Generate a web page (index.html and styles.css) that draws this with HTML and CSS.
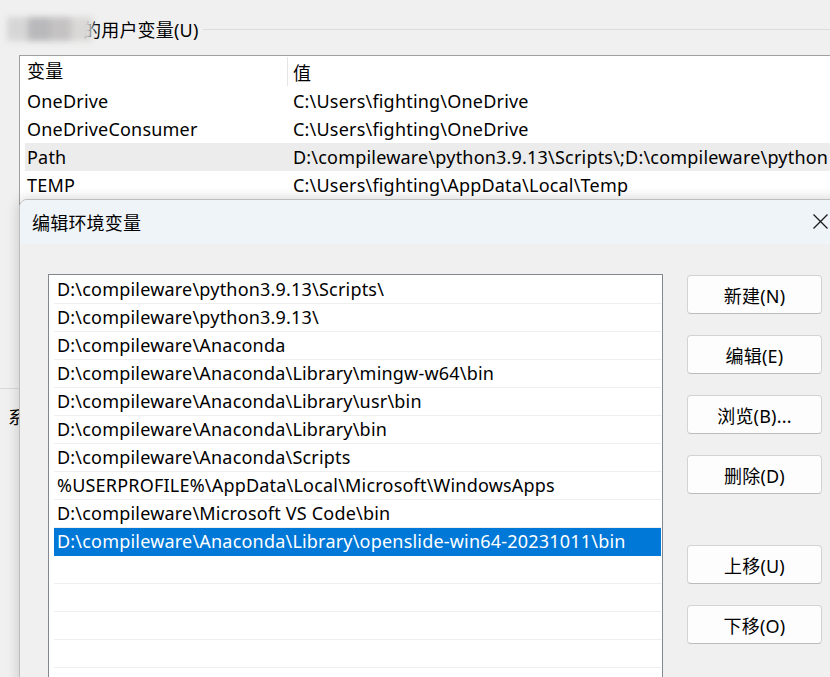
FILE: index.html
```html
<!DOCTYPE html>
<html lang="zh-CN">
<head>
<meta charset="utf-8">
<title>编辑环境变量</title>
<link rel="stylesheet" href="styles.css">
</head>
<body>
<div class="bgwin">
  <div class="group-head">
    <span class="blur"><i class="b1"></i><i class="b2"></i><i class="b3"></i><i class="b4"></i></span>
    <span class="group-label">的用户变量(U)</span>
    <span class="group-line"></span>
  </div>
  <div class="lv">
    <div class="lv-head">
      <span class="c1">变量</span>
      <span class="c2">值</span>
    </div>
    <div class="lv-row"><span class="c1">OneDrive</span><span class="c2">C:\Users\fighting\OneDrive</span></div>
    <div class="lv-row"><span class="c1">OneDriveConsumer</span><span class="c2">C:\Users\fighting\OneDrive</span></div>
    <div class="lv-row sel"><span class="c1">Path</span><span class="c2">D:\compileware\python3.9.13\Scripts\;D:\compileware\python</span></div>
    <div class="lv-row"><span class="c1">TEMP</span><span class="c2">C:\Users\fighting\AppData\Local\Temp</span></div>
  </div>
  <div class="sep-line"></div>
  <div class="sys-clip"><span class="sys-label">系统变量(S)</span></div>
</div>

<div class="dialog">
  <div class="titlebar">
    <span class="title">编辑环境变量</span>
    <svg class="close" width="15" height="15" viewBox="0 0 15 15"><path d="M0.5 0.5 L14.5 14.5 M14.5 0.5 L0.5 14.5" stroke="#1b1b1b" stroke-width="1.3" fill="none"/></svg>
  </div>
  <div class="body">
    <div class="listbox">
      <div class="item">D:\compileware\python3.9.13\Scripts\</div>
      <div class="item">D:\compileware\python3.9.13\</div>
      <div class="item">D:\compileware\Anaconda</div>
      <div class="item">D:\compileware\Anaconda\Library\mingw-w64\bin</div>
      <div class="item">D:\compileware\Anaconda\Library\usr\bin</div>
      <div class="item">D:\compileware\Anaconda\Library\bin</div>
      <div class="item">D:\compileware\Anaconda\Scripts</div>
      <div class="item">%USERPROFILE%\AppData\Local\Microsoft\WindowsApps</div>
      <div class="item">D:\compileware\Microsoft VS Code\bin</div>
      <div class="item selected">D:\compileware\Anaconda\Library\openslide-win64-20231011\bin</div>
      <div class="item"></div>
      <div class="item"></div>
      <div class="item"></div>
      <div class="item"></div>
      <div class="item"></div>
    </div>
    <div class="buttons">
      <button class="btn">新建(N)</button>
      <button class="btn">编辑(E)</button>
      <button class="btn">浏览(B)...</button>
      <button class="btn">删除(D)</button>
      <button class="btn gap">上移(U)</button>
      <button class="btn">下移(O)</button>
    </div>
  </div>
</div>
</body>
</html>
```
FILE: styles.css
```css
html, body {
  margin: 0;
  padding: 0;
}
body {
  width: 830px;
  height: 677px;
  overflow: hidden;
  background: #f0f0f0;
  font-family: "Noto Sans", "Noto Sans CJK SC", sans-serif;
  font-size: 18px;
  letter-spacing: 0.2px;
  color: #000;
  position: relative;
}

/* background window */
.bgwin {
  padding-top: 17px;
}
.group-head {
  display: flex;
  align-items: center;
  height: 24px;
  padding-left: 7px;
}
.blur {
  display: flex;
  width: 85px;
  height: 24px;
  margin-right: -9px;
  filter: blur(3px);
  position: relative;
  z-index: 1;
  flex: none;
}
.blur i {
  display: block;
  height: 100%;
  flex: 1;
}
.blur .b1 { background: #d6d6d6; }
.blur .b2 { background: #b9b9bb; }
.blur .b3 { background: #c4c2c2; }
.blur .b4 { background: #d9d8d6; }
.group-label {
  white-space: nowrap;
  padding-right: 4px;
}
.group-line {
  flex: 1;
  height: 1px;
  background: #dcdcdc;
}

.lv {
  margin: 14px 0 0 19px;
  height: 247px;
  background: #fff;
  border-top: 1px solid #a0a0a0;
  border-left: 1px solid #a0a0a0;
  overflow: hidden;
}
.lv-head {
  display: flex;
  height: 31px;
  align-items: center;
  margin-left: 5px;
}
.lv-head .c1 {
  border-right: 1px solid #e5e5e5;
  height: 29px;
  line-height: 29px;
}
.c1 {
  width: 260px;
  padding-left: 2px;
  flex: none;
  box-sizing: content-box;
}
.lv-head .c2 { padding-left: 5px; }
.lv-row .c1 { width: 261px; }
.lv-row .c2 { padding-left: 5px; }
.lv-row {
  display: flex;
  height: 28px;
  align-items: center;
  margin-left: 5px;
  white-space: nowrap;
}
.lv-row.sel { background: #ececec; }
.sep-line {
  margin-top: 85px;
  height: 1px;
  background: #d8d8d8;
}
.sys-clip {
  margin: 14px 0 0 8px;
  width: 12px;
  overflow: hidden;
  white-space: nowrap;
}

/* dialog */
.dialog {
  position: absolute;
  left: 19px;
  top: 199px;
  width: 840px;
  height: 520px;
  background: #f0f0f0;
  border: 1px solid #bdbdbd;
  border-top-left-radius: 8px;
  box-shadow: 0 0 14px rgba(0, 0, 0, 0.18);
  overflow: hidden;
}
.titlebar {
  height: 44px;
  background: #eef4f8;
  display: flex;
  align-items: center;
  padding-left: 12px;
}
.title { flex: 1; }
.close {
  position: absolute;
  left: 793px;
  top: 14px;
}
.body {
  display: flex;
  align-items: flex-start;
  padding: 30px 0 0 28px;
}
.listbox {
  width: 615px;
  height: 420px;
  background: #fff;
  border: 1px solid #828790;
  padding: 1px 0 0 5px;
  box-sizing: border-box;
  overflow: hidden;
  flex: none;
}
.item {
  height: 28px;
  line-height: 27px;
  padding-left: 3px;
  margin-right: 1px;
  border-bottom: 1px solid #eeeeee;
  box-sizing: border-box;
  white-space: nowrap;
  overflow: hidden;
}
.item.selected {
  background: #0078d7;
  color: #fff;
  border-bottom-color: #0078d7;
}
.buttons {
  display: flex;
  flex-direction: column;
  gap: 21px;
  margin-left: 24px;
  margin-top: 1px;
}
.btn {
  width: 135px;
  height: 39px;
  background: #fdfdfd;
  border: 1px solid #d3d3d3;
  border-bottom-color: #bcbcbc;
  border-radius: 4px;
  font-family: inherit;
  font-size: 18px;
  letter-spacing: 0.2px;
  color: #000;
  padding: 0;
}
.btn.gap { margin-top: 30px; }
```
